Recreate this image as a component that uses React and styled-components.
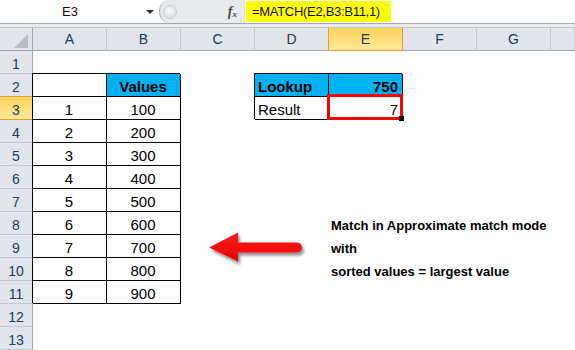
import React from 'react'
import styled, { createGlobalStyle } from 'styled-components'

// sheet props
const tp = {
  headerBg: '#e1e5ea',
  headerLine: '#c2c8d0',
  headerEdge: '#9ea6b1',
  headerText: '#23395a',
  selTop: '#fbd35e',
  selBottom: '#ffe896',
  selLine: '#dc9f3c',
  blue: '#00b0f0',
  font: '"Liberation Sans", Arial, sans-serif',
}

const GlobalStyle = createGlobalStyle`
  html, body {
    margin: 0;
    padding: 0;
    background: #fff;
  }
  body {
    font-family: ${tp.font};
    overflow: hidden;
  }
`

const Window = styled.div`
  width: 575px;
  height: 350px;
  overflow: hidden;
  display: flex;
  flex-direction: column;
  background: #fff;
`

const FormulaBar = styled.div`
  display: flex;
  height: 24px;
  box-sizing: border-box;
  border-bottom: 1px solid #a4a9b0;
  background: #fff;
`

const NameBox = styled.div`
  width: 159px;
  display: flex;
  align-items: center;
  font-size: 13px;
  color: #111;
`

const NameText = styled.span`
  width: 140px;
  text-align: center;
`

const Caret = styled.span`
  margin-left: 6px;
  width: 0;
  height: 0;
  border-left: 4px solid transparent;
  border-right: 4px solid transparent;
  border-top: 4px solid #333;
`

const FxArea = styled.div`
  width: 86px;
  box-sizing: border-box;
  display: flex;
  align-items: center;
  justify-content: space-between;
  padding: 0 8px 0 3px;
  background: #e7e9ec;
  border-left: 1px solid #aab0b8;
  border-radius: 11px 0 0 11px;
`

const Knob = styled.span`
  width: 12px;
  height: 12px;
  border-radius: 50%;
  background: radial-gradient(circle at 45% 40%, #fbfbfc 0%, #e3e6ea 55%, #c7ccd2 100%);
  border: 1px solid #c9ced5;
`

const Fx = styled.span`
  font-family: "Liberation Serif", "Times New Roman", serif;
  font-style: italic;
  font-weight: bold;
  font-size: 14px;
  color: #4a4a4a;

  sub {
    font-size: 9px;
    vertical-align: -1px;
  }
`

const FormulaInput = styled.div`
  flex: 1;
  display: flex;
  align-items: stretch;
  padding: 1px 0 1px 1px;
`

const FormulaText = styled.span`
  display: flex;
  align-items: center;
  padding: 0 11px 0 6px;
  background: #ffff00;
  font-size: 13px;
  letter-spacing: -0.3px;
  color: #111;
`

const Band = styled.div`
  height: 3px;
  background: #e8ebee;
`

const Sheet = styled.div`
  display: grid;
  grid-template-columns: 33px repeat(7, 74px) 1fr;
  grid-template-rows: 24px repeat(13, 23px);
`

const Head = styled.div`
  grid-row: ${p => p.$r};
  grid-column: ${p => p.$c};
  box-sizing: border-box;
  display: flex;
  align-items: ${p => (p.$row ? 'flex-end' : 'center')};
  justify-content: center;
  padding-bottom: ${p => (p.$row ? '1px' : '0')};
  font-size: 14px;
  color: ${tp.headerText};
  background: ${p => (p.$sel ? `linear-gradient(${tp.selTop}, ${tp.selBottom})` : tp.headerBg)};
  border-right: 1px solid ${p => (p.$sel ? tp.selLine : p.$row ? tp.headerEdge : tp.headerLine)};
  border-bottom: 1px solid ${p => (p.$sel ? tp.selLine : p.$row ? tp.headerLine : tp.headerEdge)};
  border-top: ${p => (p.$row ? 'none' : `1px solid ${tp.headerLine}`)};
  ${p => p.$sel && !p.$row && `border-left: 1px solid ${tp.selLine}; margin-left: -1px;`}
  ${p => p.$sel && p.$row && `border-top: 1px solid ${tp.selLine}; margin-top: -1px;`}
`

const Corner = styled(Head)`
  position: relative;
  border-right-color: ${tp.headerEdge};

  &::after {
    content: '';
    position: absolute;
    right: 4px;
    bottom: 2px;
    border-left: 14px solid transparent;
    border-bottom: 14px solid #b7bcc3;
  }
`

const Cell = styled.div`
  grid-row: ${p => p.$r};
  grid-column: ${p => p.$c};
  position: relative;
  box-sizing: border-box;
  display: flex;
  align-items: flex-end;
  justify-content: ${p => ({ left: 'flex-start', right: 'flex-end', center: 'center' }[p.$align] || 'flex-start')};
  padding: 0 4px 1px 3px;
  white-space: nowrap;
  font-size: 15px;
  font-weight: ${p => (p.$bold ? 'bold' : 'normal')};
  color: #000;
  background: ${p => p.$fill || 'transparent'};
  ${p => p.$table && `
    border-right: 1px solid #000;
    border-bottom: 1px solid #000;
    box-shadow: -1px -1px 0 0 #000;
  `}
`

const Note = styled.div`
  grid-row: ${p => p.$r};
  grid-column: 6 / 10;
  display: flex;
  align-items: flex-end;
  padding: 0 0 2px 2px;
  white-space: nowrap;
  font-size: 13px;
  font-weight: bold;
  color: #000;
`

const Selection = styled.span`
  position: absolute;
  z-index: 1;
  top: -3px;
  left: -2px;
  right: -1px;
  bottom: -1px;
  border: 3px solid #ff0000;
  pointer-events: none;

  &::after {
    content: '';
    position: absolute;
    right: -4px;
    bottom: -4px;
    width: 5px;
    height: 5px;
    background: #000;
  }
`

const ArrowBox = styled.div`
  grid-row: 9 / 12;
  grid-column: 4 / 6;
  z-index: 1;
`

const Arrow = () => (
  <svg width="148" height="69" viewBox="0 0 148 69">
    <defs>
      <filter id="shadow" x="-20%" y="-40%" width="140%" height="180%">
        <feGaussianBlur in="SourceAlpha" stdDeviation="1.6" />
        <feOffset dx="2" dy="3" result="blur" />
        <feComponentTransfer>
          <feFuncA type="linear" slope="0.45" />
        </feComponentTransfer>
        <feMerge>
          <feMergeNode />
          <feMergeNode in="SourceGraphic" />
        </feMerge>
      </filter>
      <linearGradient id="red" x1="0" y1="0" x2="0" y2="1">
        <stop offset="0" stopColor="#ff1a1a" />
        <stop offset="1" stopColor="#f00000" />
      </linearGradient>
    </defs>
    <path
      d="M28 35.5 L57 20.5 L57 30.5 L116 30.5 A5 5 0 0 1 116 40.5 L57 40.5 L57 49.5 Z"
      fill="url(#red)"
      filter="url(#shadow)"
    />
  </svg>
)

const colLetters = ['A', 'B', 'C', 'D', 'E', 'F', 'G']

const buildCells = () => {
  const c = {
    A2: { table: true },
    B2: { v: 'Values', bold: true, fill: tp.blue, align: 'center', table: true },
    D2: { v: 'Lookup', bold: true, fill: tp.blue, align: 'left', table: true },
    E2: { v: '750', bold: true, fill: tp.blue, align: 'right', table: true },
    D3: { v: 'Result', align: 'left', table: true },
    E3: { v: '7', align: 'right', table: true, selected: true },
  }
  for (let i = 1; i <= 9; i++) {
    c[`A${i + 2}`] = { v: String(i), align: 'center', table: true }
    c[`B${i + 2}`] = { v: String(i * 100), align: 'center', table: true }
  }
  return c
}

const cells = buildCells()

const notes = [
  { row: 8, text: 'Match in Approximate match mode' },
  { row: 9, text: 'with' },
  { row: 10, text: 'sorted values = largest value' },
]

const App = () => {
  const rows = Array.from({ length: 13 }, (_, i) => i + 1)

  return (
    <Window>
      <GlobalStyle />
      <FormulaBar>
        <NameBox>
          <NameText>E3</NameText>
          <Caret />
        </NameBox>
        <FxArea>
          <Knob />
          <Fx>f<sub>x</sub></Fx>
        </FxArea>
        <FormulaInput>
          <FormulaText>=MATCH(E2,B3:B11,1)</FormulaText>
        </FormulaInput>
      </FormulaBar>
      <Band />
      <Sheet>
        <Corner $r={1} $c={1} />
        {colLetters.map((l, i) => (
          <Head key={l} $r={1} $c={i + 2} $sel={l === 'E'}>{l}</Head>
        ))}
        <Head $r={1} $c={9} />

        {rows.map(r => (
          <React.Fragment key={r}>
            <Head $row $r={r + 1} $c={1} $sel={r === 3}>{r}</Head>
            {colLetters.map((l, i) => {
              const d = cells[`${l}${r}`]
              if (!d) return null
              return (
                <Cell
                  key={l}
                  $r={r + 1}
                  $c={i + 2}
                  $align={d.align}
                  $bold={d.bold}
                  $fill={d.fill}
                  $table={d.table}
                >
                  {d.v}
                  {d.selected && <Selection />}
                </Cell>
              )
            })}
          </React.Fragment>
        ))}

        {notes.map(n => (
          <Note key={n.row} $r={n.row + 1}>{n.text}</Note>
        ))}

        <ArrowBox>
          <Arrow />
        </ArrowBox>
      </Sheet>
    </Window>
  )
}

export default App
